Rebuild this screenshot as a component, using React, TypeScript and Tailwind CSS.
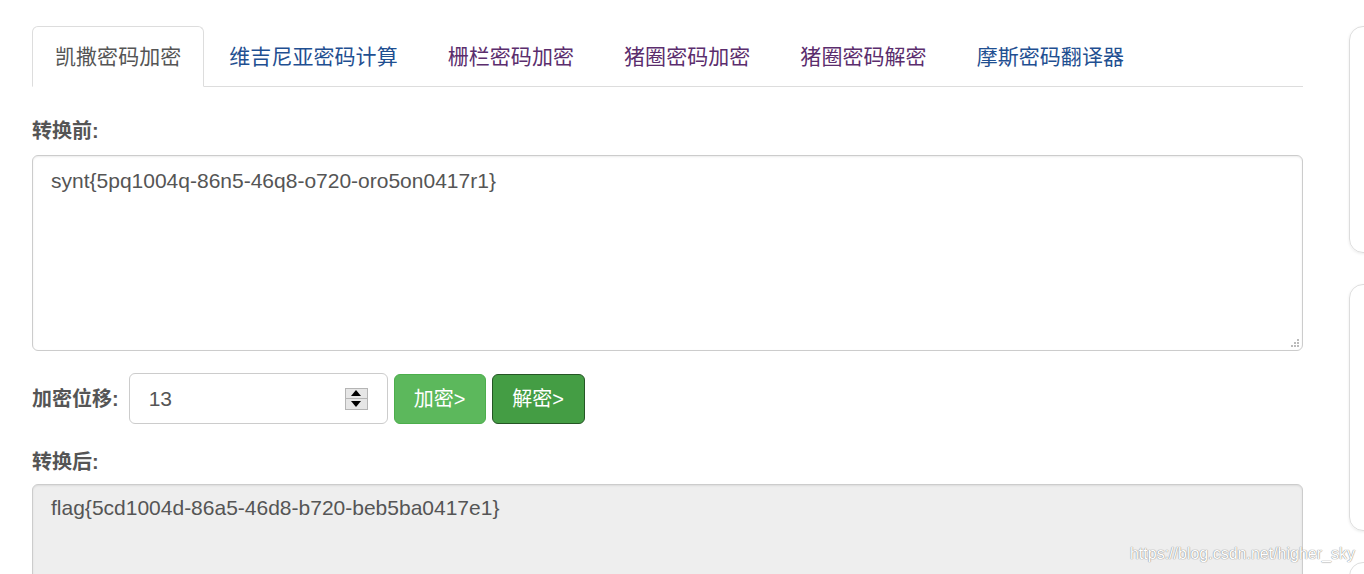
import React from 'react';

const TABS = [
  { label: '凯撒密码加密', color: 'text-[#555555]', active: true },
  { label: '维吉尼亚密码计算', color: 'text-[#1f4f91]' },
  { label: '栅栏密码加密', color: 'text-[#5b2d6d]' },
  { label: '猪圈密码加密', color: 'text-[#5b2d6d]' },
  { label: '猪圈密码解密', color: 'text-[#5b2d6d]' },
  { label: '摩斯密码翻译器', color: 'text-[#1f4f91]' },
];

const font = "font-['Liberation_Sans','Noto_Sans_CJK_SC',sans-serif]";

function Spinner() {
  return (
    <div className="flex h-[22px] w-[23px] flex-col border border-[#b5b5b5] bg-[#e6e6e6]">
      <div className="flex flex-1 items-center justify-center border-b border-[#b5b5b5]">
        <div className="h-0 w-0 border-x-[5px] border-b-[6px] border-x-transparent border-b-black" />
      </div>
      <div className="flex flex-1 items-center justify-center">
        <div className="h-0 w-0 border-x-[5px] border-t-[6px] border-x-transparent border-t-black" />
      </div>
    </div>
  );
}

export default function App() {
  return (
    <div className={`relative flex h-[574px] w-[1364px] gap-[46px] overflow-hidden bg-white pl-8 pt-[26px] ${font}`}>
      {/* Main column */}
      <div className="w-[1271px] shrink-0">
        {/* Tabs */}
        <div className="flex border-b border-[#dddddd]">
          {TABS.map((t) => (
            <div
              key={t.label}
              className={`-mb-px h-[61px] rounded-t-md border text-[21px] tracking-[0.05px] leading-[59px] ${t.color} ${
                t.active ? 'border-[#dddddd] border-b-white bg-white px-[22px]' : 'border-transparent px-6'
              }`}
            >
              {t.label}
            </div>
          ))}
        </div>

        {/* Before */}
        <div className="mt-[29px] text-[20px] font-bold leading-[30px] text-[#555555]">转换前:</div>
        <div className="relative mt-[9px] h-[196px] rounded-md border border-[#cccccc] px-[18px] py-[10px] text-[21px] leading-[30px] text-[#555555] shadow-[inset_0_1px_2px_rgba(0,0,0,0.08)]">
          synt{'{'}5pq1004q-86n5-46q8-o720-oro5on0417r1{'}'}
          <div className="absolute bottom-[3px] right-[3px] grid grid-cols-3 gap-px">
            <span className="h-[2px] w-[2px]" />
            <span className="h-[2px] w-[2px]" />
            <span className="h-[2px] w-[2px] bg-[#bbbbbb]" />
            <span className="h-[2px] w-[2px]" />
            <span className="h-[2px] w-[2px] bg-[#bbbbbb]" />
            <span className="h-[2px] w-[2px] bg-[#bbbbbb]" />
            <span className="h-[2px] w-[2px] bg-[#bbbbbb]" />
            <span className="h-[2px] w-[2px] bg-[#bbbbbb]" />
            <span className="h-[2px] w-[2px] bg-[#bbbbbb]" />
          </div>
        </div>

        {/* Shift row */}
        <div className="mt-[22px] flex items-center">
          <span className="mr-[10px] text-[20px] font-bold leading-[30px] text-[#555555]">加密位移:</span>
          <div className="flex h-[51px] w-[259px] items-center justify-between rounded-md border border-[#cccccc] pl-[19px] pr-[19px] text-[21px] text-[#555555]">
            <span>13</span>
            <Spinner />
          </div>
          <button className="ml-[6px] h-[50px] w-[92px] rounded-md border border-[#4cae4c] bg-[#5cb85c] text-[20px] text-white">
            加密&gt;
          </button>
          <button className="ml-[6px] h-[50px] w-[93px] rounded-md border border-[#255625] bg-[#449d44] text-[20px] text-white">
            解密&gt;
          </button>
        </div>

        {/* After */}
        <div className="mt-[23px] text-[20px] font-bold leading-[30px] text-[#555555]">转换后:</div>
        <div className="mt-[7px] h-[196px] rounded-md border border-[#cccccc] bg-[#eeeeee] px-[18px] py-[8px] text-[21px] leading-[30px] text-[#555555] shadow-[inset_0_1px_2px_rgba(0,0,0,0.08)]">
          flag{'{'}5cd1004d-86a5-46d8-b720-beb5ba0417e1{'}'}
        </div>
      </div>

      {/* Side column */}
      <div className="flex w-[300px] shrink-0 flex-col gap-[31px]">
        <div className="h-[227px] shrink-0 rounded-[14px] border border-[#dddddd] shadow-[0_1px_3px_rgba(0,0,0,0.08)]" />
        <div className="h-[247px] shrink-0 rounded-[14px] border border-[#dddddd] shadow-[0_1px_3px_rgba(0,0,0,0.08)]" />
        <div className="h-[200px] shrink-0 rounded-[14px] border border-[#dddddd]" />
      </div>

      {/* Watermark */}
      <div className="absolute bottom-[8px] right-[9px] font-['Liberation_Sans',sans-serif] text-[16px] text-white [text-shadow:0_0_1px_#888,0_0_1px_#888]">
        https://blog.csdn.net/higher_sky
      </div>
    </div>
  );
}
